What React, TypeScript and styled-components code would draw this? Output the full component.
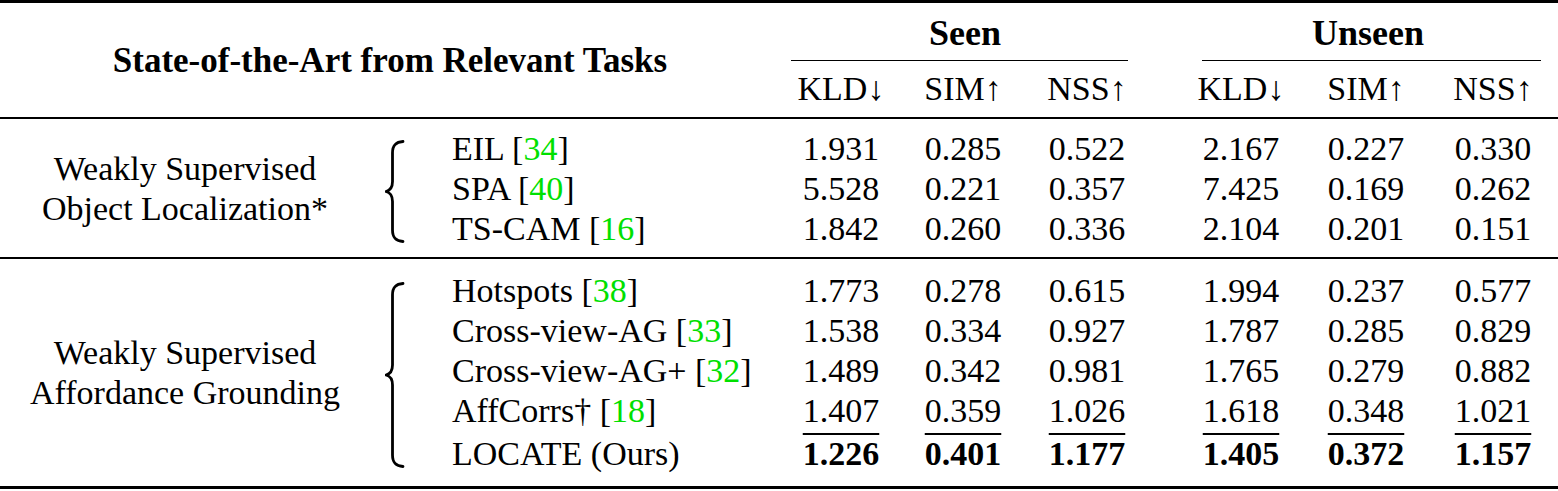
import React from "react";
import styled, { createGlobalStyle } from "styled-components";

const GlobalStyle = createGlobalStyle`
  html, body {
    margin: 0;
    padding: 0;
    background: #ffffff;
  }
  body {
    font-family: "Liberation Serif", "Times New Roman", serif;
    color: #000000;
  }
`;

const COLUMNS = "370px 50px 360px 122px 122px 126px 30px 122px 128px 126px";

type Style = "plain" | "second" | "best";

interface IMethod {
  name: string;
  cite: string;
  seen: string[];
  unseen: string[];
  style: Style;
}

interface IGroup {
  label: string[];
  padTop: number;
  padBottom: number;
  methods: IMethod[];
}

const groups: IGroup[] = [
  {
    label: ["Weakly Supervised", "Object Localization*"],
    padTop: 10,
    padBottom: 8,
    methods: [
      { name: "EIL", cite: "34", seen: ["1.931", "0.285", "0.522"], unseen: ["2.167", "0.227", "0.330"], style: "plain" },
      { name: "SPA", cite: "40", seen: ["5.528", "0.221", "0.357"], unseen: ["7.425", "0.169", "0.262"], style: "plain" },
      { name: "TS-CAM", cite: "16", seen: ["1.842", "0.260", "0.336"], unseen: ["2.104", "0.201", "0.151"], style: "plain" },
    ],
  },
  {
    label: ["Weakly Supervised", "Affordance Grounding"],
    padTop: 12,
    padBottom: 12,
    methods: [
      { name: "Hotspots", cite: "38", seen: ["1.773", "0.278", "0.615"], unseen: ["1.994", "0.237", "0.577"], style: "plain" },
      { name: "Cross-view-AG", cite: "33", seen: ["1.538", "0.334", "0.927"], unseen: ["1.787", "0.285", "0.829"], style: "plain" },
      { name: "Cross-view-AG+", cite: "32", seen: ["1.489", "0.342", "0.981"], unseen: ["1.765", "0.279", "0.882"], style: "plain" },
      { name: "AffCorrs†", cite: "18", seen: ["1.407", "0.359", "1.026"], unseen: ["1.618", "0.348", "1.021"], style: "second" },
      { name: "LOCATE (Ours)", cite: "", seen: ["1.226", "0.401", "1.177"], unseen: ["1.405", "0.372", "1.157"], style: "best" },
    ],
  },
];

const Table = styled.div`
  width: 1558px;
  font-size: 34px;
`;

const Rule = styled.div<{ $weight: number }>`
  height: ${(p) => p.$weight}px;
  background: #000000;
`;

const HeaderGrid = styled.div`
  display: grid;
  grid-template-columns: ${COLUMNS};
  grid-template-rows: 40px 16px 40px;
  padding: 10px 0 8px;
`;

const TitleCell = styled.div`
  grid-column: 1 / 4;
  grid-row: 1 / 4;
  display: flex;
  align-items: center;
  justify-content: center;
  font-weight: 700;
  font-size: 35px;
`;

const SplitTitle = styled.div<{ $col: string }>`
  grid-column: ${(p) => p.$col};
  grid-row: 1;
  text-align: center;
  line-height: 40px;
  font-weight: 700;
  font-size: 36px;
`;

const CMidRule = styled.div<{ $col: string; $left: number; $right: number }>`
  grid-column: ${(p) => p.$col};
  grid-row: 2;
  align-self: start;
  margin: 7px ${(p) => p.$right}px 0 ${(p) => p.$left}px;
  height: 1px;
  background: #000000;
`;

const MetricCell = styled.div<{ $col: number }>`
  grid-column: ${(p) => p.$col};
  grid-row: 3;
  text-align: center;
  line-height: 40px;
  white-space: nowrap;
`;

const GroupGrid = styled.div<{ $rows: string; $pt: number; $pb: number }>`
  display: grid;
  grid-template-columns: ${COLUMNS};
  grid-template-rows: ${(p) => p.$rows};
  padding: ${(p) => p.$pt}px 0 ${(p) => p.$pb}px;
`;

const GroupLabel = styled.div`
  grid-column: 1;
  grid-row: 1 / -1;
  display: flex;
  flex-direction: column;
  align-items: center;
  justify-content: center;
  line-height: 40px;
  white-space: nowrap;
`;

const BraceCell = styled.div`
  grid-column: 2;
  grid-row: 1 / -1;
  padding: 11px 0 6px 15px;
  display: flex;
`;

const NameCell = styled.div<{ $row: number }>`
  grid-column: 3;
  grid-row: ${(p) => p.$row};
  padding-left: 32px;
  line-height: 40px;
  white-space: nowrap;
`;

const Cite = styled.span`
  color: #00e000;
`;

const ValueCell = styled.div<{ $row: number; $col: number; $kind: Style }>`
  grid-column: ${(p) => p.$col};
  grid-row: ${(p) => p.$row};
  text-align: center;
  line-height: 40px;
  white-space: nowrap;
  font-weight: ${(p) => (p.$kind === "best" ? 700 : 400)};
  text-decoration: ${(p) => (p.$kind === "second" ? "underline" : "none")};
  text-decoration-thickness: 1.5px;
  text-underline-offset: 11px;
`;

const Brace: React.FC<{ height: number }> = ({ height }) => {
  const h = height;
  const m = h / 2;
  const d = `M18,1.5 C11,2 7.5,5 7.5,13 L7.5,${m - 10} C7.5,${m - 4} 5,${m - 1} 1,${m} C5,${m + 1} 7.5,${m + 4} 7.5,${m + 10} L7.5,${h - 13} C7.5,${h - 5} 11,${h - 2} 18,${h - 1.5}`;
  return (
    <svg width="20" height={h} viewBox={`0 0 20 ${h}`}>
      <path d={d} fill="none" stroke="#000" strokeWidth="2.8" strokeLinecap="round" strokeLinejoin="round" />
    </svg>
  );
};

const seenCols = [4, 5, 6];
const unseenCols = [8, 9, 10];
const metrics = ["KLD↓", "SIM↑", "NSS↑"];

const rowHeight = (m: IMethod) => (m.style === "second" ? 43 : 40);

const Group: React.FC<{ group: IGroup }> = ({ group }) => {
  const heights = group.methods.map(rowHeight);
  const total = heights.reduce((a, b) => a + b, 0);
  return (
    <GroupGrid
      $rows={heights.map((h) => `${h}px`).join(" ")}
      $pt={group.padTop}
      $pb={group.padBottom}
    >
      <GroupLabel>
        {group.label.map((l) => (
          <span key={l}>{l}</span>
        ))}
      </GroupLabel>
      <BraceCell>
        <Brace height={total - 17} />
      </BraceCell>
      {group.methods.map((m, i) => (
        <React.Fragment key={m.name}>
          <NameCell $row={i + 1}>
            {m.name}
            {m.cite && (
              <>
                {" ["}
                <Cite>{m.cite}</Cite>]
              </>
            )}
          </NameCell>
          {m.seen.map((v, j) => (
            <ValueCell key={`s${j}`} $row={i + 1} $col={seenCols[j]} $kind={m.style}>
              {v}
            </ValueCell>
          ))}
          {m.unseen.map((v, j) => (
            <ValueCell key={`u${j}`} $row={i + 1} $col={unseenCols[j]} $kind={m.style}>
              {v}
            </ValueCell>
          ))}
        </React.Fragment>
      ))}
    </GroupGrid>
  );
};

const App: React.FC = () => (
  <>
    <GlobalStyle />
    <Table>
      <Rule $weight={3} />
      <HeaderGrid>
        <TitleCell>State-of-the-Art from Relevant Tasks</TitleCell>
        <SplitTitle $col="4 / 7">Seen</SplitTitle>
        <SplitTitle $col="8 / 11">Unseen</SplitTitle>
        <CMidRule $col="4 / 7" $left={11} $right={22} />
        <CMidRule $col="8 / 11" $left={22} $right={15} />
        {metrics.map((t, j) => (
          <MetricCell key={`s${t}`} $col={seenCols[j]}>
            {t}
          </MetricCell>
        ))}
        {metrics.map((t, j) => (
          <MetricCell key={`u${t}`} $col={unseenCols[j]}>
            {t}
          </MetricCell>
        ))}
      </HeaderGrid>
      <Rule $weight={2} />
      <Group group={groups[0]} />
      <Rule $weight={2} />
      <Group group={groups[1]} />
      <Rule $weight={3} />
    </Table>
  </>
);

export default App;
